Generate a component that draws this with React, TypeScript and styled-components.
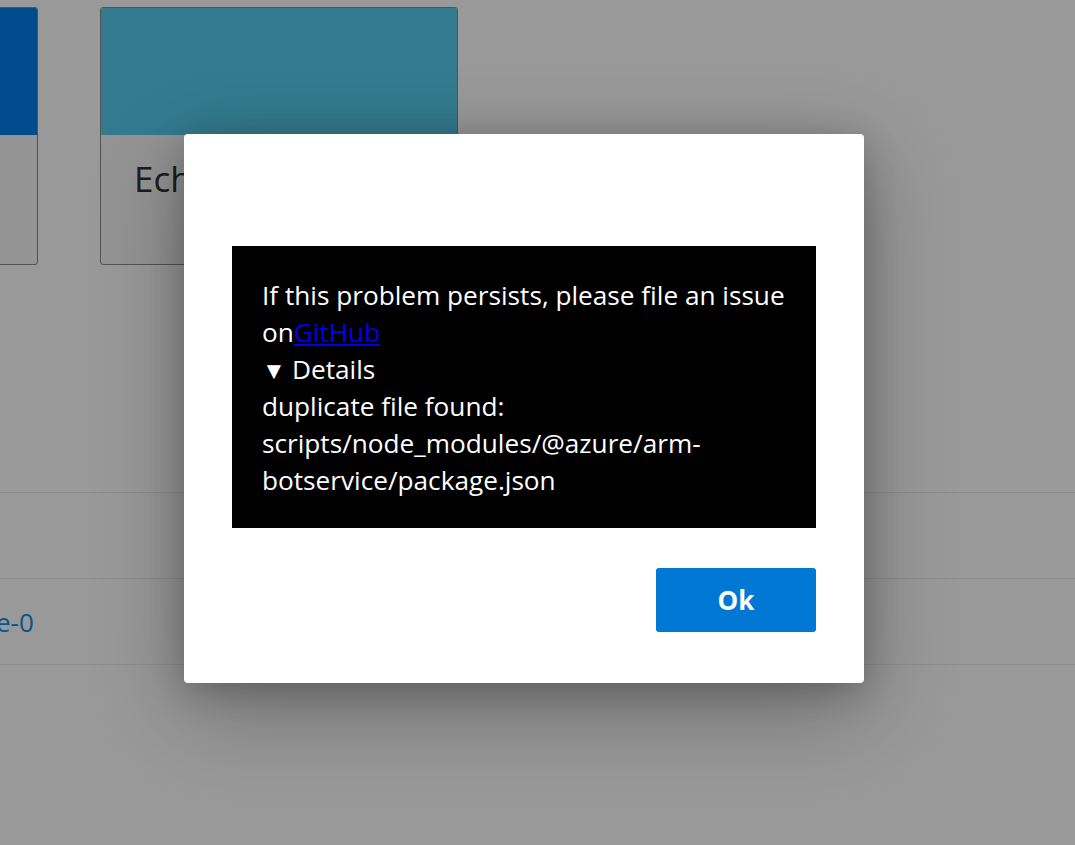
import React from "react";
import styled, { createGlobalStyle } from "styled-components";

const Global = createGlobalStyle`
  html, body { margin: 0; padding: 0; background: #ffffff; overflow: hidden; }
  body { font-family: "Segoe UI", "Open Sans", "Noto Sans", sans-serif; }
`;

const Page = styled.div`
  position: relative;
  width: 1075px;
  height: 845px;
  overflow: hidden;
  background: #ffffff;
`;

const CardRow = styled.div`
  display: flex;
  gap: 62px;
  padding-top: 7px;
  margin-left: -320px;
`;

const Card = styled.div`
  box-sizing: border-box;
  width: 358px;
  height: 258px;
  border: 1.5px solid #8c8c8c;
  border-radius: 3px;
  background: #f7f7f7;
  display: flex;
  flex-direction: column;
  overflow: hidden;
`;

const CardTop = styled.div<{ $color: string }>`
  height: 127px;
  background: ${(p) => p.$color};
  flex: none;
`;

const CardTitle = styled.div`
  padding: 20px 33px;
  font-size: 35px;
  color: #323130;
  font-family: "Segoe UI", "Open Sans", sans-serif;
`;

const List = styled.div`
  margin-top: 227px;
  border-top: 1px solid #ebebeb;
`;

const Row = styled.div`
  height: 85px;
  border-bottom: 1px solid #ebebeb;
  display: flex;
  align-items: center;
`;

const RowLink = styled.a`
  margin-left: -4px;
  font-size: 26px;
  color: #0a8cf0;
  text-decoration: none;
  font-family: "Segoe UI", "Open Sans", sans-serif;
`;

const Overlay = styled.div`
  position: absolute;
  inset: 0;
  background: rgba(0, 0, 0, 0.4);
  display: flex;
  align-items: center;
  justify-content: center;
  padding: 0 27px 28px 0;
  box-sizing: border-box;
`;

const Dialog = styled.div`
  width: 680px;
  box-sizing: border-box;
  background: #ffffff;
  border-radius: 4px;
  padding: 48px 48px 51px;
  box-shadow: 0 26px 90px rgba(0, 0, 0, 0.3), 0 6px 34px rgba(0, 0, 0, 0.2);
`;

const Header = styled.div`
  height: 64px;
`;

const ErrorBox = styled.div`
  background: #000000;
  color: #ffffff;
  padding: 31px 30px 29px;
  font-family: "Segoe UI", "Open Sans", sans-serif;
  font-size: 26.2px;
  line-height: 36.8px;
  height: 282px;
  box-sizing: border-box;
`;

const Line = styled.div``;

const GitLink = styled.a`
  color: #0000ee;
  text-decoration: underline;
`;

const Details = styled.details`
  & > summary {
    display: block;
    list-style: none;
    cursor: pointer;
  }
`;

const Marker = styled.span`
  display: inline-block;
  width: 30px;
  font-size: 24px;
`;

const Footer = styled.div`
  display: flex;
  justify-content: flex-end;
  margin-top: 40px;
`;

const OkButton = styled.button`
  width: 160px;
  height: 64px;
  border: none;
  border-radius: 3px;
  background: #0078d4;
  color: #ffffff;
  font-family: "Segoe UI", "Open Sans", sans-serif;
  font-weight: 700;
  font-size: 26px;
  cursor: pointer;
`;

export default function App() {
  return (
    <>
      <Global />
      <Page>
        <CardRow>
          <Card>
            <CardTop $color="#007ee8" />
            <CardTitle>Bot</CardTitle>
          </Card>
          <Card>
            <CardTop $color="#57cdee" />
            <CardTitle>Echo Bot</CardTitle>
          </Card>
        </CardRow>
        <List>
          <Row />
          <Row>
            <RowLink href="#">e-0</RowLink>
          </Row>
        </List>
        <Overlay>
          <Dialog role="dialog">
            <Header />
            <ErrorBox>
              <Line>
                If this problem persists, please file an issue on<GitLink href="#">GitHub</GitLink>
              </Line>
              <Details open>
                <summary>
                  <Marker>▼</Marker>Details
                </summary>
                duplicate file found: scripts/node_modules/@azure/arm-botservice/package.json
              </Details>
            </ErrorBox>
            <Footer>
              <OkButton>Ok</OkButton>
            </Footer>
          </Dialog>
        </Overlay>
      </Page>
    </>
  );
}
